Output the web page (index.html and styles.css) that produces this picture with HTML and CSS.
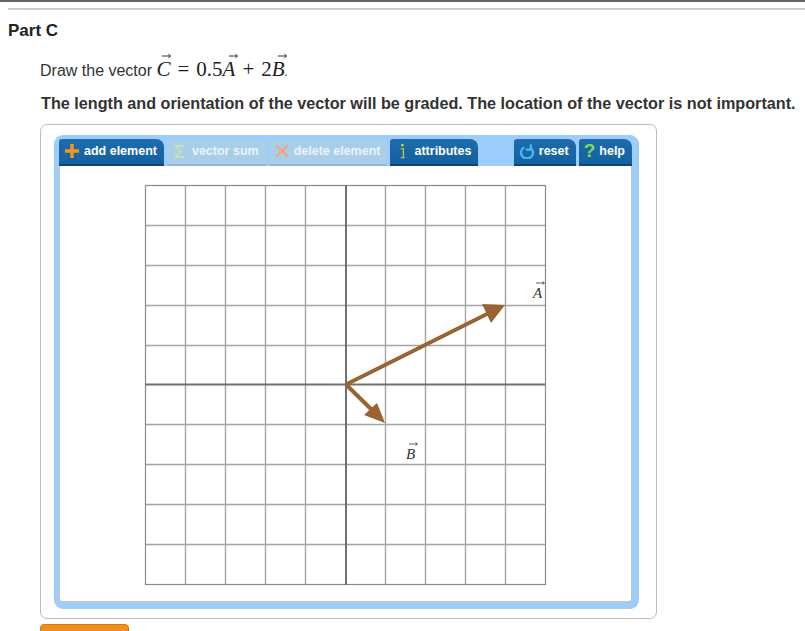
FILE: index.html
```html
<!DOCTYPE html>
<html lang="en">

<head>
    <meta charset="UTF-8">
    <title>Part C</title>
    <link rel="stylesheet" href="styles.css">
</head>

<body>
    <div class="top-rule"></div>
    <div class="sub-rule"></div>

    <h2 class="part-title">Part C</h2>

    <div class="question">
        <p class="prompt">Draw the vector
            <span class="math">
                <span class="vec">C<svg class="arrow" viewBox="0 0 12 6"><path d="M1 3H10M8 1L10.5 3L8 5" /></svg></span><span class="op">=</span>0.5<span class="vec">A<svg class="arrow" viewBox="0 0 12 6"><path d="M1 3H10M8 1L10.5 3L8 5" /></svg></span><span class="op">+</span>2<span class="vec">B<svg class="arrow" viewBox="0 0 12 6"><path d="M1 3H10M8 1L10.5 3L8 5" /></svg></span><span class="dot">.</span>
            </span>
        </p>
        <p class="instructions">The length and orientation of the vector will be graded. The location of the vector is not important.</p>

        <div class="panel">
            <div class="tool-frame">
                <div class="toolbar">
                    <button class="tool">
                        <svg class="ico" viewBox="0 0 16 16"><path d="M8 1V15M1 8H15" stroke="#f7941d" stroke-width="3.4" /></svg>
                        add element
                    </button>
                    <button class="tool off">
                        <svg class="ico" viewBox="0 0 16 16"><path d="M12.5 3H3.5L8.5 8.5L3.5 14H12.5" fill="none" stroke="#cfe6a8" stroke-width="1.3" /></svg>
                        vector sum
                    </button>
                    <button class="tool off">
                        <svg class="ico" viewBox="0 0 16 16"><path d="M2.5 2.5L13.5 13.5M13.5 2.5L2.5 13.5" stroke="#f0a58f" stroke-width="2.6" /></svg>
                        delete element
                    </button>
                    <button class="tool">
                        <svg class="ico ico-i" viewBox="0 0 10 18"><circle cx="5" cy="2.5" r="1.5" fill="#d8cc3a" /><path d="M3 6.5H6V16M3 16.5H7.5" fill="none" stroke="#d8cc3a" stroke-width="1.3" /></svg>
                        attributes
                    </button>
                    <span class="spacer"></span>
                    <button class="tool">
                        <svg class="ico" viewBox="0 0 16 16"><path d="M5.2 4.2A6 6 0 1 0 10.8 4.2" fill="none" stroke="#45b8f0" stroke-width="2.4" /><path d="M11.8 1.2V6.6H6.6" fill="none" stroke="#45b8f0" stroke-width="2.2" /></svg>
                        reset
                    </button>
                    <button class="tool">
                        <span class="q">?</span>
                        help
                    </button>
                </div>
                <div class="canvas">
                    <svg class="grid" width="420" height="420" viewBox="0 0 420 420">
                        <g stroke="#a3a3a3" stroke-width="1.4">
                            <path d="M40.5 0V400M80.5 0V400M120.5 0V400M160.5 0V400M240.5 0V400M280.5 0V400M320.5 0V400M360.5 0V400" />
                            <path d="M0 40.5H400M0 80.5H400M0 120.5H400M0 160.5H400M0 239.5H400M0 279.5H400M0 319.5H400M0 359.5H400" />
                        </g>
                        <rect x="0.5" y="0.5" width="400" height="399" fill="none" stroke="#8a8a8a" stroke-width="1.2" />
                        <path d="M201 0V400M0 199.5H400" stroke="#707070" stroke-width="2" />
                        <g stroke="#9a6332" stroke-width="4" fill="#9a6332">
                            <path d="M201 199.5L346 127" />
                            <path d="M201 199.5L229 227" />
                        </g>
                        <g fill="#9a6332">
                            <polygon points="360,120 337,119 346,138" />
                            <polygon points="240,238 219,230 232,218" />
                        </g>
                        <g class="label">
                            <text x="388" y="113">A</text>
                            <path d="M391 98H399M397.5 96.5L399.5 98L397.5 99.5" fill="none" stroke="#333" stroke-width="0.8" />
                            <text x="261" y="274">B</text>
                            <path d="M264 259H272M270.5 257.5L272.5 259L270.5 260.5" fill="none" stroke="#333" stroke-width="0.8" />
                        </g>
                    </svg>
                </div>
            </div>
        </div>

        <button class="submit">Submit</button>
    </div>
</body>

</html>
```

FILE: styles.css
```css
body {
    margin: 0;
    background-color: white;
    font-family: "Liberation Sans", Arial, sans-serif;
    color: #333;
    overflow: hidden;
}

.top-rule {
    height: 2px;
    background-color: #666;
}

.sub-rule {
    height: 2px;
    margin: 6px 0 0 8px;
    background-color: #ccc;
}

.part-title {
    margin: 11px 0 0 8px;
    font-size: 17px;
    line-height: 20px;
    color: #222;
}

.question {
    padding-left: 40px;
}

.prompt {
    margin: 15px 0 0 0;
    font-size: 16px;
    line-height: 26px;
}

.math {
    font-family: "Liberation Serif", "Times New Roman", serif;
    font-size: 21px;
    color: #222;
}

.vec {
    position: relative;
    font-style: italic;
    display: inline-block;
}

.vec .arrow {
    position: absolute;
    left: 5px;
    top: -3px;
    width: 11px;
    height: 6px;
    fill: none;
    stroke: #222;
    stroke-width: 1;
}

.op {
    margin: 0 7px;
}

.dot {
    font-size: 12px;
}

.instructions {
    margin: 8px 0 0 1px;
    font-size: 16.2px;
    line-height: 20px;
    font-weight: bold;
    color: #333;
}

.panel {
    width: 585px;
    margin-top: 11px;
    padding: 10px 17px 9px 13px;
    border: 1px solid #bdbdbd;
    border-radius: 7px;
}

.tool-frame {
    background-color: #9dcdfb;
    border-radius: 9px;
    padding: 4px 7px 7px 5px;
}

.toolbar {
    display: flex;
    gap: 3px;
    height: 27px;
}

.spacer {
    flex: 1;
}

.tool {
    display: flex;
    align-items: center;
    gap: 4px;
    height: 27px;
    padding: 0 7px 1px 5px;
    border: none;
    border-bottom: 2px solid #0c4676;
    border-radius: 3px 8px 0 0;
    background: linear-gradient(#1d6cad, #14609f);
    color: white;
    font-family: "Liberation Sans", Arial, sans-serif;
    font-size: 12.5px;
    font-weight: bold;
}

.tool.off {
    background: #a9cfe8;
    border-bottom-color: #8fb8d6;
    color: #eaf3fa;
}

.ico {
    width: 16px;
    height: 16px;
}

.ico-i {
    width: 9px;
    height: 18px;
    margin: 0 3px;
}

.q {
    font-size: 19px;
    color: #7ed957;
    line-height: 16px;
}

.canvas {
    height: 416px;
    padding: 19px 0 0 85px;
    background-color: white;
    border: 1px solid #c4c4c4;
    border-top: none;
    border-radius: 0 0 3px 3px;
}

.grid {
    display: block;
    overflow: visible;
}

.label text {
    font-family: "Liberation Serif", "Times New Roman", serif;
    font-style: italic;
    font-size: 15px;
    fill: #333;
}

.submit {
    display: block;
    width: 89px;
    height: 30px;
    margin-top: 5px;
    border: 1px solid #d17a10;
    border-radius: 4px;
    background-color: #f0901e;
    color: white;
    font-size: 14px;
    font-weight: bold;
}
```
